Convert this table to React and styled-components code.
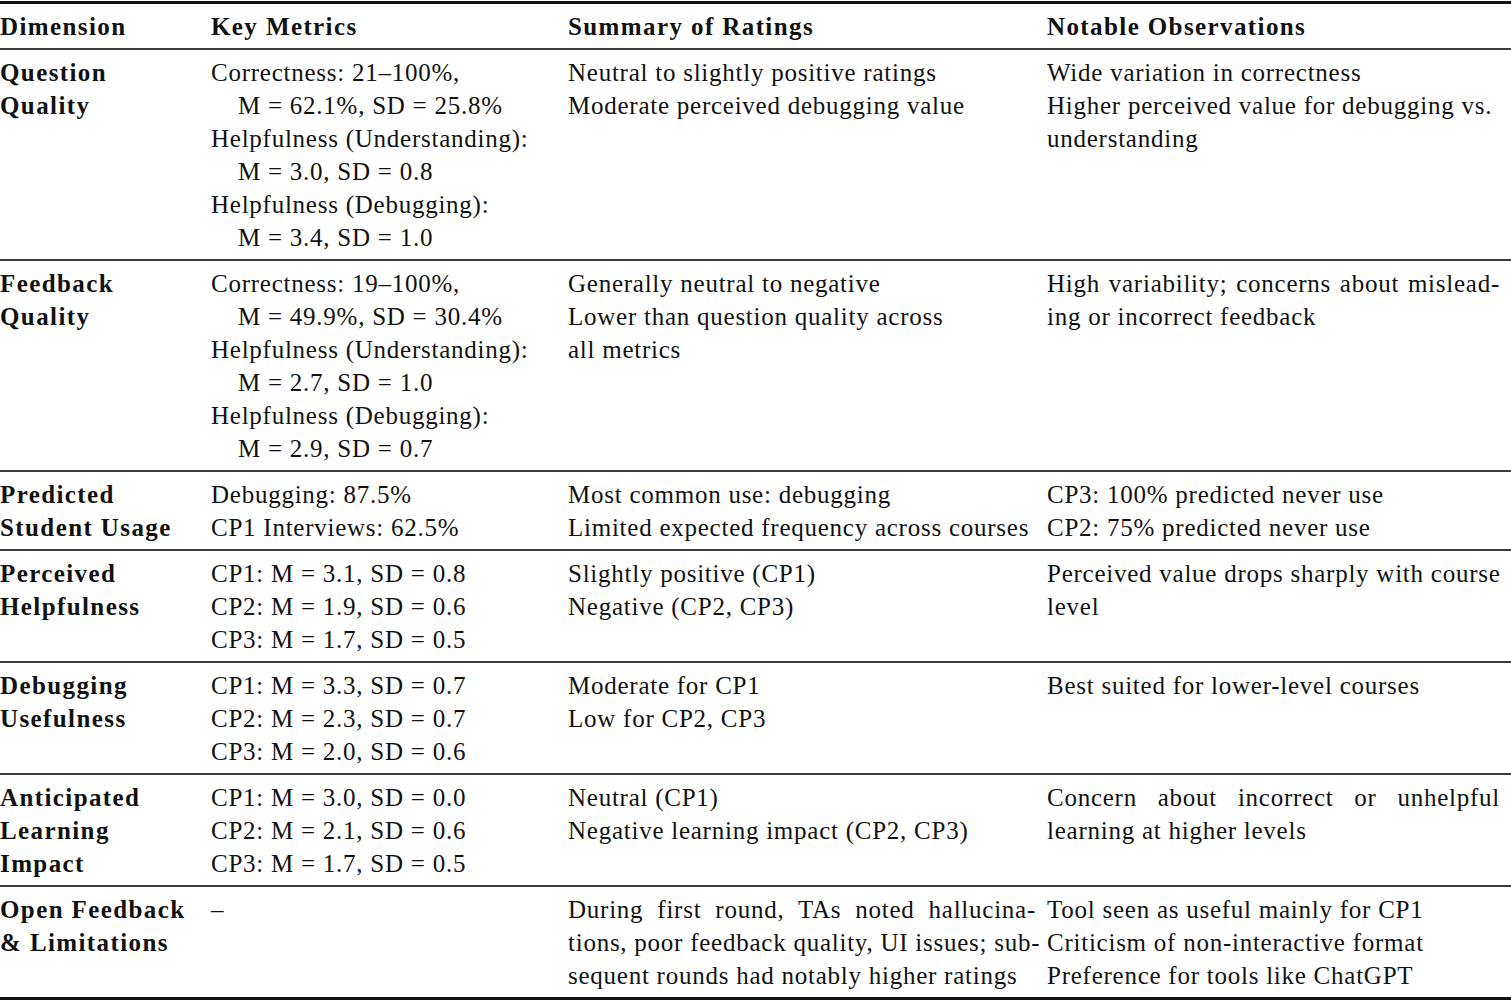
import React from "react";
import styled, { createGlobalStyle } from "styled-components";

const GlobalStyle = createGlobalStyle`
  html, body {
    margin: 0;
    padding: 0;
    background: #ffffff;
  }
  body {
    font-family: "Liberation Serif", "Times New Roman", serif;
    color: #111111;
  }
`;

const Table = styled.div`
  width: 1511px;
  border-top: 3px solid #111;
  border-bottom: 3px solid #111;
  margin-top: 1px;
`;

const Row = styled.div`
  display: grid;
  grid-template-columns: 200px 346px 468px 453px;
  column-gap: 11px;
  padding: 6px 11px 5px 0;
  border-top: ${(p) => (p.$first ? "none" : "2px solid #3c3c3c")};
`;

const Cell = styled.div`
  font-size: 25px;
  line-height: 33px;
  font-weight: ${(p) => (p.$bold ? 700 : 400)};
  letter-spacing: ${(p) => (p.$bold ? "1.4px" : "0.75px")};
`;

const Line = styled.div`
  white-space: nowrap;
  padding-left: ${(p) => (p.$indent ? "27px" : "0")};
  text-align: ${(p) => (p.$justify ? "justify" : "left")};
  text-align-last: ${(p) => (p.$justify ? "justify" : "auto")};
`;

// "~" prefix = hanging indent, "|" suffix = justified line
const rows = [
  {
    dim: ["Question", "Quality"],
    metrics: [
      "Correctness: 21–100%,",
      "~M = 62.1%, SD = 25.8%",
      "Helpfulness (Understanding):",
      "~M = 3.0, SD = 0.8",
      "Helpfulness (Debugging):",
      "~M = 3.4, SD = 1.0",
    ],
    summary: ["Neutral to slightly positive ratings", "Moderate perceived debugging value"],
    notes: ["Wide variation in correctness", "Higher perceived value for debugging vs.", "understanding"],
  },
  {
    dim: ["Feedback", "Quality"],
    metrics: [
      "Correctness: 19–100%,",
      "~M = 49.9%, SD = 30.4%",
      "Helpfulness (Understanding):",
      "~M = 2.7, SD = 1.0",
      "Helpfulness (Debugging):",
      "~M = 2.9, SD = 0.7",
    ],
    summary: ["Generally neutral to negative", "Lower than question quality across", "all metrics"],
    notes: ["High variability; concerns about mislead-|", "ing or incorrect feedback"],
  },
  {
    dim: ["Predicted", "Student Usage"],
    metrics: ["Debugging: 87.5%", "CP1 Interviews: 62.5%"],
    summary: ["Most common use: debugging", "Limited expected frequency across courses"],
    notes: ["CP3: 100% predicted never use", "CP2: 75% predicted never use"],
  },
  {
    dim: ["Perceived", "Helpfulness"],
    metrics: ["CP1: M = 3.1, SD = 0.8", "CP2: M = 1.9, SD = 0.6", "CP3: M = 1.7, SD = 0.5"],
    summary: ["Slightly positive (CP1)", "Negative (CP2, CP3)"],
    notes: ["Perceived value drops sharply with course|", "level"],
  },
  {
    dim: ["Debugging", "Usefulness"],
    metrics: ["CP1: M = 3.3, SD = 0.7", "CP2: M = 2.3, SD = 0.7", "CP3: M = 2.0, SD = 0.6"],
    summary: ["Moderate for CP1", "Low for CP2, CP3"],
    notes: ["Best suited for lower-level courses"],
  },
  {
    dim: ["Anticipated", "Learning", "Impact"],
    metrics: ["CP1: M = 3.0, SD = 0.0", "CP2: M = 2.1, SD = 0.6", "CP3: M = 1.7, SD = 0.5"],
    summary: ["Neutral (CP1)", "Negative learning impact (CP2, CP3)"],
    notes: ["Concern about incorrect or unhelpful|", "learning at higher levels"],
  },
  {
    dim: ["Open Feedback", "& Limitations"],
    metrics: ["–"],
    summary: [
      "During first round, TAs noted hallucina-|",
      "tions, poor feedback quality, UI issues; sub-|",
      "sequent rounds had notably higher ratings",
    ],
    notes: [
      "Tool seen as useful mainly for CP1",
      "Criticism of non-interactive format",
      "Preference for tools like ChatGPT",
    ],
  },
];

const Lines = ({ items, bold }) => (
  <Cell $bold={bold}>
    {items.map((raw, i) => {
      const indent = raw.startsWith("~");
      const justify = raw.endsWith("|");
      const text = raw.replace(/^~/, "").replace(/\|$/, "");
      return (
        <Line key={i} $indent={indent} $justify={justify}>
          {text}
        </Line>
      );
    })}
  </Cell>
);

const App = () => {
  return (
    <>
      <GlobalStyle />
      <Table>
        <Row $first>
          <Lines bold items={["Dimension"]} />
          <Lines bold items={["Key Metrics"]} />
          <Lines bold items={["Summary of Ratings"]} />
          <Lines bold items={["Notable Observations"]} />
        </Row>
        {rows.map((r, i) => (
          <Row key={i}>
            <Lines bold items={r.dim} />
            <Lines items={r.metrics} />
            <Lines items={r.summary} />
            <Lines items={r.notes} />
          </Row>
        ))}
      </Table>
    </>
  );
};

export default App;
